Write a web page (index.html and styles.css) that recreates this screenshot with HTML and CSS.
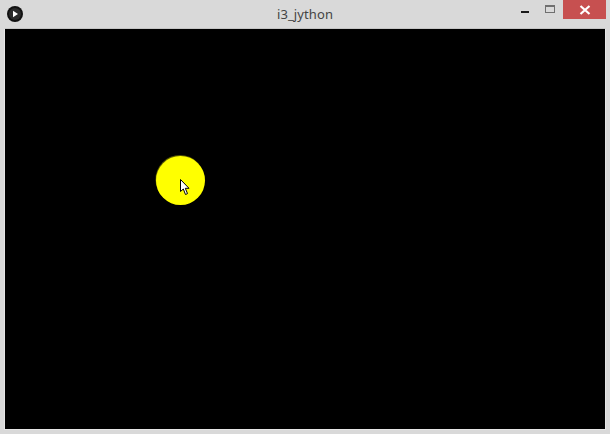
FILE: index.html
```html
<!DOCTYPE html>
<html lang="en">
<head>
<meta charset="utf-8">
<title>i3_jython</title>
<link rel="stylesheet" href="styles.css">
</head>
<body>
<div class="window">
  <header class="titlebar">
    <svg class="app-icon" width="16" height="16" viewBox="0 0 16 16" aria-hidden="true">
      <circle cx="8" cy="8" r="8" fill="#111"/>
      <circle cx="8" cy="8" r="6" fill="#2a2a2a"/>
      <path d="M6 4.8 L11 8 L6 11.2 Z" fill="#fff"/>
    </svg>
    <span class="title">i3_jython</span>
    <div class="controls">
      <div class="btn btn-min"><span class="min-glyph"></span></div>
      <div class="btn btn-max"><span class="max-glyph"></span></div>
      <div class="btn btn-close">
        <svg width="12" height="10" viewBox="0 0 12 10" aria-hidden="true">
          <path d="M1.5 1 L10.5 9 M10.5 1 L1.5 9" stroke="#fff" stroke-width="2.2" fill="none"/>
        </svg>
      </div>
    </div>
  </header>
  <main class="frame">
    <div class="canvas">
      <div class="ball"></div>
      <svg class="cursor" width="11" height="17" viewBox="0 0 11 17" aria-hidden="true">
        <path d="M0.5 0.5 L0.5 12.5 L3.3 10 L5.5 15.5 L7.5 14.6 L5.3 9.3 L9 9.3 Z" fill="#fff" stroke="#000" stroke-width="1"/>
      </svg>
    </div>
  </main>
</div>
</body>
</html>
```
FILE: styles.css
```css
html, body {
  margin: 0;
  padding: 0;
  background: #d9d9d9;
}
.window {
  width: 610px;
  height: 434px;
  display: flex;
  flex-direction: column;
  background: #d9d9d9;
  overflow: hidden;
}
.titlebar {
  height: 28px;
  flex: none;
  position: relative;
  display: flex;
  align-items: flex-start;
}
.app-icon {
  margin: 6px 0 0 7px;
}
.title {
  position: absolute;
  left: 0;
  right: 0;
  top: 5px;
  text-align: center;
  font: 13px/19px "Noto Sans", "Open Sans", sans-serif;
  letter-spacing: 0.1px;
  color: #444;
}
.controls {
  margin-left: auto;
  margin-right: 4px;
  display: flex;
  position: relative;
}
.btn {
  height: 19px;
  display: flex;
  align-items: center;
  justify-content: center;
}
.btn-min { width: 24px; }
.btn-max { width: 26px; }
.btn-close {
  width: 43px;
  background: #c75050;
}
.min-glyph {
  width: 8px;
  height: 2px;
  margin-top: 5px;
  background: #1a1a1a;
}
.max-glyph {
  width: 8px;
  height: 5px;
  border: 1px solid #6f6f6f;
  border-top-width: 2px;
  margin-bottom: 1px;
}
.frame {
  margin: 0 4px 4px 4px;
  flex: 1;
  border: 1px solid #e6e6e6;
  border-top-color: #c4c4c4;
  display: flex;
}
.canvas {
  flex: 1;
  background: #000;
  position: relative;
}
.ball {
  position: absolute;
  left: 151px;
  top: 127px;
  width: 49px;
  height: 49px;
  border-radius: 50%;
  background: #ffff00;
  box-shadow: -0.5px -1px 0 #5a5a00;
}
.cursor {
  position: absolute;
  left: 175px;
  top: 150px;
}
```
